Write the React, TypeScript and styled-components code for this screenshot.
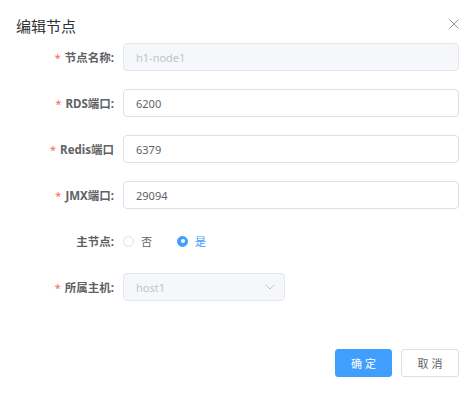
import React from "react";
import styled, { createGlobalStyle } from "styled-components";

const GlobalStyle = createGlobalStyle`
	html, body {
		margin: 0;
		padding: 0;
		background: #ffffff;
	}
	body {
		font-family: "Noto Sans", "Noto Sans CJK SC", sans-serif;
		color: #606266;
	}
`;

const Dialog = styled.div`
	width: 474px;
	height: 393px;
	background: #ffffff;
	display: flex;
	flex-direction: column;
	box-sizing: border-box;
`;

const Header = styled.div`
	display: flex;
	align-items: center;
	justify-content: space-between;
	padding: 16px 13px 7px 16px;
`;

const Title = styled.span`
	font-size: 15px;
	line-height: 20px;
	color: #303133;
`;

const CloseButton = styled.button`
	border: none;
	background: none;
	padding: 0;
	width: 14px;
	height: 14px;
	display: flex;
	align-items: center;
	justify-content: center;
	margin-top: -4px;
	cursor: pointer;
`;

const Body = styled.div`
	padding: 0 15px;
`;

const FormItem = styled.div`
	display: flex;
	align-items: center;
	height: 28px;
	margin-bottom: 18px;
`;

const Label = styled.label`
	width: 108px;
	flex-shrink: 0;
	box-sizing: border-box;
	padding-right: 9px;
	text-align: right;
	font-size: 11.5px;
	font-weight: 700;
	color: #606266;
	white-space: nowrap;
`;

const Star = styled.span`
	color: #f56c6c;
	margin-right: 4px;
	font-weight: 400;
`;

const Input = styled.input<{ $width?: number }>`
	box-sizing: border-box;
	height: 28px;
	width: ${(p) => (p.$width ? `${p.$width}px` : "100%")};
	border: 1px solid #dcdfe6;
	border-radius: 4px;
	padding: 0 12px;
	font-family: inherit;
	font-size: 11px;
	color: #606266;
	background: #ffffff;
	outline: none;

	&:disabled {
		background: #f5f7fa;
		border-color: #e4e7ed;
		color: #c0c4cc;
	}
`;

const SelectBox = styled.div`
	position: relative;
	width: 162px;
`;

const Arrow = styled.span`
	position: absolute;
	right: 10px;
	top: 50%;
	transform: translateY(-50%);
	display: flex;
`;

const RadioGroup = styled.div`
	display: flex;
	align-items: center;
`;

const RadioItem = styled.label<{ $checked?: boolean }>`
	display: flex;
	align-items: center;
	margin-right: 25px;
	font-size: 11px;
	color: ${(p) => (p.$checked ? "#409eff" : "#606266")};
	cursor: pointer;
`;

const RadioCircle = styled.span<{ $checked?: boolean }>`
	box-sizing: border-box;
	width: 11px;
	height: 11px;
	border-radius: 50%;
	border: 1px solid ${(p) => (p.$checked ? "#409eff" : "#dcdfe6")};
	background: ${(p) => (p.$checked ? "#409eff" : "#ffffff")};
	display: flex;
	align-items: center;
	justify-content: center;
	margin-right: 7px;

	&::after {
		content: "";
		width: 4px;
		height: 4px;
		border-radius: 50%;
		background: #ffffff;
		display: ${(p) => (p.$checked ? "block" : "none")};
	}
`;

const Footer = styled.div`
	display: flex;
	justify-content: flex-end;
	gap: 9px;
	padding: 30px 15px 16px;
`;

const Button = styled.button<{ $primary?: boolean }>`
	box-sizing: border-box;
	height: 28px;
	width: ${(p) => (p.$primary ? "57px" : "58px")};
	border-radius: 3px;
	border: 1px solid ${(p) => (p.$primary ? "#409eff" : "#dcdfe6")};
	background: ${(p) => (p.$primary ? "#409eff" : "#ffffff")};
	color: ${(p) => (p.$primary ? "#ffffff" : "#606266")};
	font-family: inherit;
	font-size: 11px;
	padding: 0;
	cursor: pointer;
`;

const fields = [
	{ label: "节点名称:", value: "h1-node1", disabled: true },
	{ label: "RDS端口:", value: "6200" },
	{ label: "Redis端口", value: "6379" },
	{ label: "JMX端口:", value: "29094" }
];

export default function App() {
	return (
		<Dialog>
			<GlobalStyle />
			<Header>
				<Title>编辑节点</Title>
				<CloseButton aria-label="关闭">
					<svg width="10" height="10" viewBox="0 0 10 10">
						<path d="M0.5 0.5 L9.5 9.5 M9.5 0.5 L0.5 9.5" stroke="#909399" strokeWidth="1" />
					</svg>
				</CloseButton>
			</Header>
			<Body>
				{fields.map((f) => (
					<FormItem key={f.label}>
						<Label>
							<Star>*</Star>
							{f.label}
						</Label>
						<Input defaultValue={f.value} disabled={f.disabled} />
					</FormItem>
				))}
				<FormItem>
					<Label>主节点:</Label>
					<RadioGroup>
						<RadioItem>
							<RadioCircle />否
						</RadioItem>
						<RadioItem $checked>
							<RadioCircle $checked />是
						</RadioItem>
					</RadioGroup>
				</FormItem>
				<FormItem>
					<Label>
						<Star>*</Star>
						所属主机:
					</Label>
					<SelectBox>
						<Input defaultValue="host1" disabled />
						<Arrow>
							<svg width="10" height="6" viewBox="0 0 10 6">
								<path d="M0.5 0.5 L5 5 L9.5 0.5" fill="none" stroke="#c0c4cc" strokeWidth="1" />
							</svg>
						</Arrow>
					</SelectBox>
				</FormItem>
			</Body>
			<Footer>
				<Button $primary>确 定</Button>
				<Button>取 消</Button>
			</Footer>
		</Dialog>
	);
}
